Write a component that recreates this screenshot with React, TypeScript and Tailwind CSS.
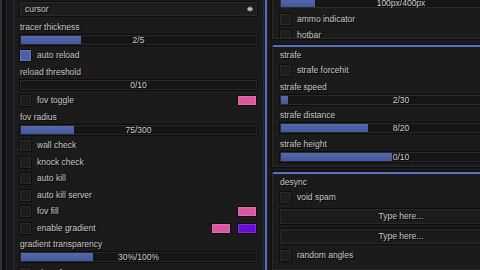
import React from 'react';

const Label: React.FC<{ text: string }> = ({ text }) => (
  <div className="h-[10px] leading-[10px] text-[#c9c9c9] [text-shadow:1px_1px_0_#000]">{text}</div>
);

const Slider: React.FC<{ label: string; value: string; fill: string }> = ({ label, value, fill }) => (
  <div className="flex flex-col">
    <Label text={label} />
    <div className="relative mt-[3px] h-[10px] border border-[#2a2a2a] bg-[#151515] shadow-[0_0_0_1px_#0c0c0c]">
      <div className={`h-full bg-gradient-to-b from-[#5569ad] to-[#44579a] ${fill}`} />
      <div className="absolute inset-0 flex items-center justify-center leading-[8px] text-[#d0d0d0] [text-shadow:1px_1px_0_#000]">
        {value}
      </div>
    </div>
  </div>
);

const Check: React.FC<{ label: string; on?: boolean; children?: React.ReactNode }> = ({ label, on, children }) => (
  <div className="flex h-[11px] items-center">
    <div
      className={`h-[11px] w-[11px] border shadow-[0_0_0_1px_#0c0c0c] ${
        on ? 'border-[#6075b8] bg-[#4b5fa2]' : 'border-[#2b2b2b] bg-[#1d1d1d]'
      }`}
    />
    <span className="ml-[6px] text-[#c9c9c9] [text-shadow:1px_1px_0_#000]">{label}</span>
    <div className="ml-auto flex gap-[6px]">{children}</div>
  </div>
);

const Swatch: React.FC<{ color: string }> = ({ color }) => (
  <div className={`h-[11px] w-[20px] border border-[#0c0c0c] shadow-[inset_0_0_0_1px_rgba(255,255,255,0.15)] ${color}`} />
);

const TextBox: React.FC = () => (
  <div className="flex h-[15px] items-center justify-center border border-[#2a2a2a] bg-[#1b1b1b] text-[#c9c9c9] shadow-[0_0_0_1px_#0c0c0c] [text-shadow:1px_1px_0_#000]">
    Type here...
  </div>
);

const Group: React.FC<{ children: React.ReactNode; className?: string }> = ({ children, className }) => (
  <div className={`border border-[#2a2a2a] bg-[#1b1b1b] shadow-[0_0_0_1px_#0d0d0d] ${className ?? ''}`}>{children}</div>
);

export default function App() {
  return (
    <div
      className="flex h-[270px] w-[480px] overflow-hidden bg-[#161616] text-[8.5px]"
      style={{ fontFamily: '"Liberation Sans", Arial, sans-serif' }}
    >
      <div className="w-[2px] shrink-0 bg-[#2e3342]" />
      <div className="w-[4px] shrink-0 bg-[#101010]" />
      <div className="flex shrink-0 border-l border-[#2b2b2b] bg-[#191919] pl-[6px]">
        {/* left column */}
        <div className="flex w-[251px] shrink-0 flex-col gap-[5.5px] border-x border-[#2a2a2a] bg-[#1b1b1b] px-[6px] pt-[2px]">
          <div className="flex h-[14px] items-center border border-[#2a2a2a] bg-[#1d1d1d] pl-[4px] pr-[3px] text-[#c9c9c9] shadow-[0_0_0_1px_#0c0c0c] [text-shadow:1px_1px_0_#000]">
            <span>cursor</span>
            <svg className="ml-auto" width="6" height="6" viewBox="0 0 6 6">
              <circle cx="3" cy="3" r="2.5" fill="#8a8a8a" />
              <rect x="0.5" y="2.5" width="5" height="1" fill="#e8e8e8" />
            </svg>
          </div>
          <Slider label="tracer thickness" value="2/5" fill="w-[60px]" />
          <Check label="auto reload" on />
          <Slider label="reload threshold" value="0/10" fill="w-[0px]" />
          <Check label="fov toggle">
            <Swatch color="bg-[#d8579e]" />
          </Check>
          <Slider label="fov radius" value="75/300" fill="w-[53px]" />
          <Check label="wall check" />
          <Check label="knock check" />
          <Check label="auto kill" />
          <Check label="auto kill server" />
          <Check label="fov fill">
            <Swatch color="bg-[#d8579e]" />
          </Check>
          <Check label="enable gradient">
            <Swatch color="bg-[#d8579e]" />
            <Swatch color="bg-[#6a0ad8]" />
          </Check>
          <Slider label="gradient transparency" value="30%/100%" fill="w-[72px]" />
          <Check label="show fov" />
        </div>
        <div className="ml-[1px] w-[2px] shrink-0 bg-[#5a71c2]" />

        {/* right column */}
        <div className="ml-[5px] flex w-[258px] shrink-0 flex-col">
          <Group className="h-[39px] overflow-hidden border-t-0">
            <div className="-mt-[2px] flex flex-col gap-[5.5px] px-[7px]">
              <div className="relative h-[10px] border border-[#2a2a2a] bg-[#151515]">
                <div className="h-full w-[34px] bg-gradient-to-b from-[#5569ad] to-[#44579a]" />
                <div className="absolute inset-0 flex items-center justify-center leading-[8px] text-[#d0d0d0] [text-shadow:1px_1px_0_#000]">
                  100px/400px
                </div>
              </div>
              <Check label="ammo indicator" />
              <Check label="hotbar" />
            </div>
          </Group>

          <Group className="mt-[6px] border-t-0">
            <div className="h-[2px] bg-[#5a71c2]" />
            <div className="flex flex-col gap-[5.5px] px-[7px] pb-[4px] pt-[2.5px]">
              <Label text="strafe" />
              <Check label="strafe forcehit" />
              <Slider label="strafe speed" value="2/30" fill="w-[7px]" />
              <Slider label="strafe distance" value="8/20" fill="w-[87px]" />
              <Slider label="strafe height" value="0/10" fill="w-[111px]" />
            </div>
          </Group>

          <Group className="mt-[5px] grow border-t-0">
            <div className="h-[2px] bg-[#5a71c2]" />
            <div className="flex flex-col gap-[5.5px] px-[7px] pt-[3px]">
              <Label text="desync" />
              <Check label="void spam" />
              <TextBox />
              <TextBox />
              <Check label="random angles" />
            </div>
          </Group>
        </div>
      </div>
    </div>
  );
}
